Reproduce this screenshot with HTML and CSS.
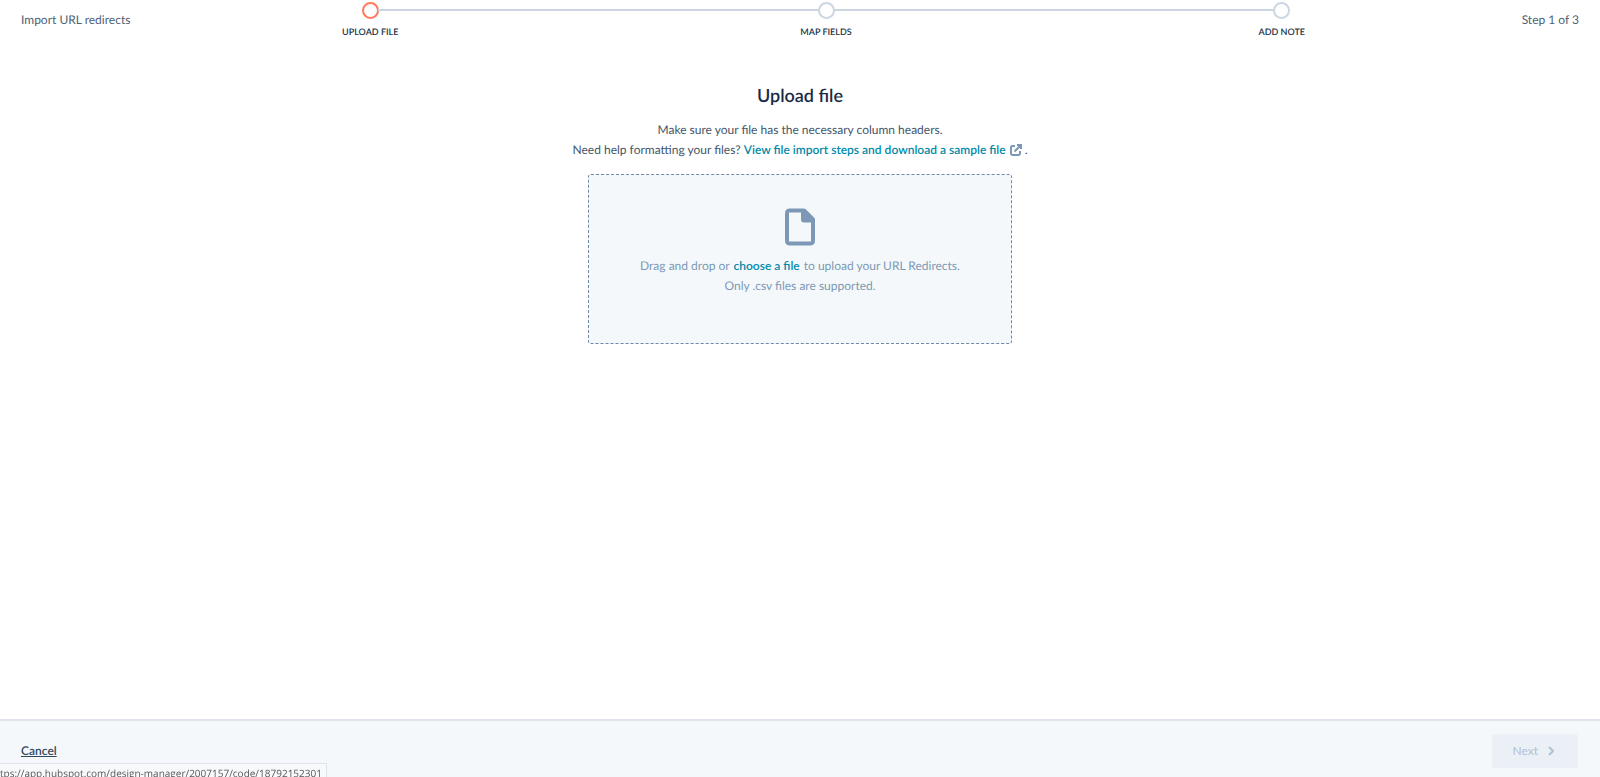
FILE: index.html
```html
<!DOCTYPE html>
<html lang="en">
<head>
<meta charset="utf-8">
<title>Import URL redirects</title>
<link rel="stylesheet" href="styles.css">
</head>
<body>
<header class="header">
  <span class="header-title">Import URL redirects</span>
  <ol class="steps">
    <li class="step step-active"><span class="step-dot"></span><span class="step-label">UPLOAD FILE</span></li>
    <li class="step"><span class="step-dot"></span><span class="step-label">MAP FIELDS</span></li>
    <li class="step"><span class="step-dot"></span><span class="step-label">ADD NOTE</span></li>
  </ol>
  <span class="header-count">Step 1 of 3</span>
</header>
<main class="main">
  <h1 class="title">Upload file</h1>
  <p class="intro">Make sure your file has the necessary column headers.<br>
    Need help formatting your files? <a class="link" href="#">View file import steps and download a sample file <svg class="external" viewBox="0 0 12 12" aria-hidden="true"><path d="M5 2H2.4Q1 2 1 3.4V9.6Q1 11 2.4 11H8.6Q10 11 10 9.6V7M4.5 7.5L10.5 1.5M7 1H11V5"/></svg></a> .</p>
  <section class="dropzone">
    <svg class="file-icon" viewBox="0 0 30 38" aria-hidden="true"><path fill-rule="evenodd" d="M5 .5H19Q20 .5 21 1.5L29 9.5Q30 10.500 30 11.500V32.500Q30 37.500 25 37.500H5Q0 37.500 0 32.500V5.500Q0 .5 5 .5ZM4 4.500V33.500H26V14.500H19Q16 14.500 16 11.500V4.500Z"/></svg>
    <p class="drop-text">Drag and drop or <button class="choose" type="button">choose a file</button> to upload your URL Redirects.<br>Only .csv files are supported.</p>
  </section>
</main>
<footer class="footer">
  <a class="cancel" href="#">Cancel</a>
  <button class="next" type="button" disabled>Next <svg class="chevron" viewBox="0 0 6 10" aria-hidden="true"><path d="M1 1L5 5L1 9"/></svg></button>
</footer>
<div class="status">tps://app.hubspot.com/design-manager/2007157/code/18792152301</div>
</body>
</html>
```
FILE: styles.css
```css
* { box-sizing: border-box; }
body {
  margin: 0;
  min-height: 100vh;
  display: flex;
  flex-direction: column;
  overflow: hidden;
  font: 12px/20px Lato, "Liberation Sans", sans-serif;
  text-rendering: geometricPrecision;
  color: #44566a;
  background: #fff;
}
.header {
  display: flex;
  gap: 12px;
  padding: 2px 21px 0 21px;
}
.header-title, .header-count { padding-top: 8px; color: #4f5f74; white-space: nowrap; }
.steps {
  flex: 1;
  display: flex;
  margin: 0;
  padding: 0;
  list-style: none;
}
.step {
  flex: 1;
  position: relative;
  display: flex;
  flex-direction: column;
  align-items: center;
  gap: 5px;
}
.step:not(:last-child)::after {
  content: "";
  position: absolute;
  top: 7px;
  left: calc(50% + 8px);
  width: calc(100% - 16px);
  height: 2px;
  background: #cbd6e2;
}
.step-dot {
  width: 17px;
  height: 17px;
  border: 2px solid #cbd6e2;
  border-radius: 50%;
}
.step-active .step-dot { border-color: #ff7a59; }
.step-label { font-size: 9px; line-height: 16px; font-weight: 600; color: #213343; }
.main {
  flex: 1;
  display: flex;
  flex-direction: column;
  align-items: center;
  padding-top: 43px;
  text-align: center;
}
.title { margin: 0; font-size: 18px; line-height: 24px; font-weight: 600; color: #1c2b45; }
.intro { margin: 13px 0 14px; }
.link { color: #008aa9; font-weight: 600; text-decoration: none; }
.external {
  width: 12px;
  height: 12px;
  margin-left: 1px;
  vertical-align: -2px;
  fill: none;
  stroke: #7c98b6;
  stroke-width: 2;
}
.dropzone {
  width: 424px;
  max-width: 100%;
  padding: 33px 40px 47px;
  border: 1px dashed #7089a8;
  border-radius: 3px;
  background: #f5f8fa;
}
.file-icon { display: block; width: 30px; height: 38px; margin: 0 auto 10px; fill: #7c98b6; }
.drop-text { margin: 0; color: #7c98b6; white-space: nowrap; }
.choose {
  margin: 0 1px;
  padding: 0;
  border: 0;
  background: none;
  font: inherit;
  font-weight: 600;
  color: #008aa9;
}
.footer {
  display: flex;
  align-items: center;
  justify-content: space-between;
  height: 58px;
  padding: 3px 22px 0 21px;
  border-top: 2px solid #dfe3eb;
  background: #f5f8fa;
}
.cancel { color: #33475b; font-weight: 600; text-decoration: underline; }
.next {
  display: flex;
  align-items: center;
  gap: 10px;
  padding: 7px 24px 7px 20px;
  border: 0;
  border-radius: 3px;
  background: #eaf0f6;
  color: #b0c1d4;
  font: inherit;
}
.chevron { width: 6px; height: 10px; fill: none; stroke: #b0c1d4; stroke-width: 2; }
.status {
  position: fixed;
  left: 0;
  bottom: 0;
  height: 14px;
  padding-right: 4px;
  border: 1px solid #dfe3eb;
  border-width: 1px 1px 0 0;
  background: #f8f9fa;
  color: #55585c;
  font: 10px/18px "Open Sans", sans-serif;
}
```
